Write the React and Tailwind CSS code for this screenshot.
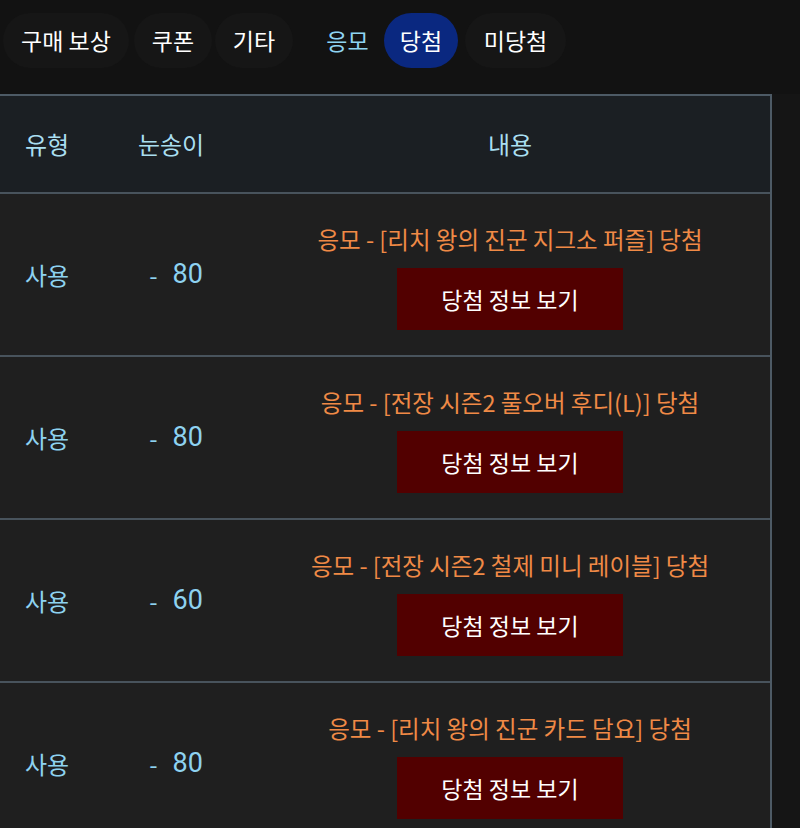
import React from 'react';

const font = { fontFamily: '"Noto Sans CJK KR", "Noto Sans", sans-serif' };

const tabs = [
  { label: '구매 보상', cls: 'ml-[3px] w-[126px] bg-[#161616] text-white' },
  { label: '쿠폰', cls: 'ml-[5px] w-[78px] bg-[#161616] text-white' },
  { label: '기타', cls: 'ml-[3px] w-[78px] bg-[#161616] text-white' },
  { label: '응모', cls: 'ml-[18px] w-[73px] text-[#8fd4f2]' },
  { label: '당첨', cls: 'w-[74px] bg-[#0a2880] text-white' },
  { label: '미당첨', cls: 'ml-[7px] w-[101px] bg-[#161616] text-white' },
];

const rows = [
  { amount: '80', title: '응모 - [리치 왕의 진군 지그소 퍼즐] 당첨' },
  { amount: '80', title: '응모 - [전장 시즌2 풀오버 후디(L)] 당첨' },
  { amount: '60', title: '응모 - [전장 시즌2 철제 미니 레이블] 당첨' },
  { amount: '80', title: '응모 - [리치 왕의 진군 카드 담요] 당첨' },
];

const Row = ({ amount, title }) => (
  <div className="flex h-[163px] border-b-2 border-[#48535c] bg-[#1f1f1f]">
    <div className="flex w-[100px] items-center pl-[25px] text-[24px] text-[#8ed2f0]">사용</div>
    <div className="flex w-[150px] items-center justify-center gap-[15px] pl-[2px] text-[#8ed2f0]">
      <span className="text-[24px]">-</span>
      <span className="text-[27px]" style={{ fontFamily: 'Roboto, sans-serif' }}>{amount}</span>
    </div>
    <div className="flex flex-1 flex-col items-center pt-[27px]">
      <div className="text-[23.5px] leading-[36px] text-[#f08a46] whitespace-nowrap">{title}</div>
      <button className="mt-[11px] flex h-[62px] w-[226px] items-center justify-center bg-[#520000] text-[23px] text-white">
        당첨 정보 보기
      </button>
    </div>
  </div>
);

export default function App() {
  return (
    <div className="h-[828px] w-[800px] overflow-hidden bg-[#121212]" style={font}>
      <div className="flex h-[94px] items-start pt-[13px]">
        {tabs.map((t) => (
          <div
            key={t.label}
            className={`flex h-[55px] shrink-0 items-center justify-center rounded-full text-[23px] whitespace-nowrap ${t.cls}`}
          >
            {t.label}
          </div>
        ))}
      </div>
      <div className="flex">
        <div className="w-[772px] border-t-2 border-r-2 border-[#4d5a65]">
          <div className="flex h-[98px] border-b-2 border-[#48535c] bg-[#1b1f23] text-[24px] text-[#a9def0]">
            <div className="flex w-[100px] items-center pl-[25px]">유형</div>
            <div className="flex w-[150px] items-center justify-center pr-[8px]">눈송이</div>
            <div className="flex flex-1 items-center justify-center">내용</div>
          </div>
          {rows.map((r, i) => (
            <Row key={i} {...r} />
          ))}
        </div>
        <div className="flex-1 bg-[#151515]" />
      </div>
    </div>
  );
}
